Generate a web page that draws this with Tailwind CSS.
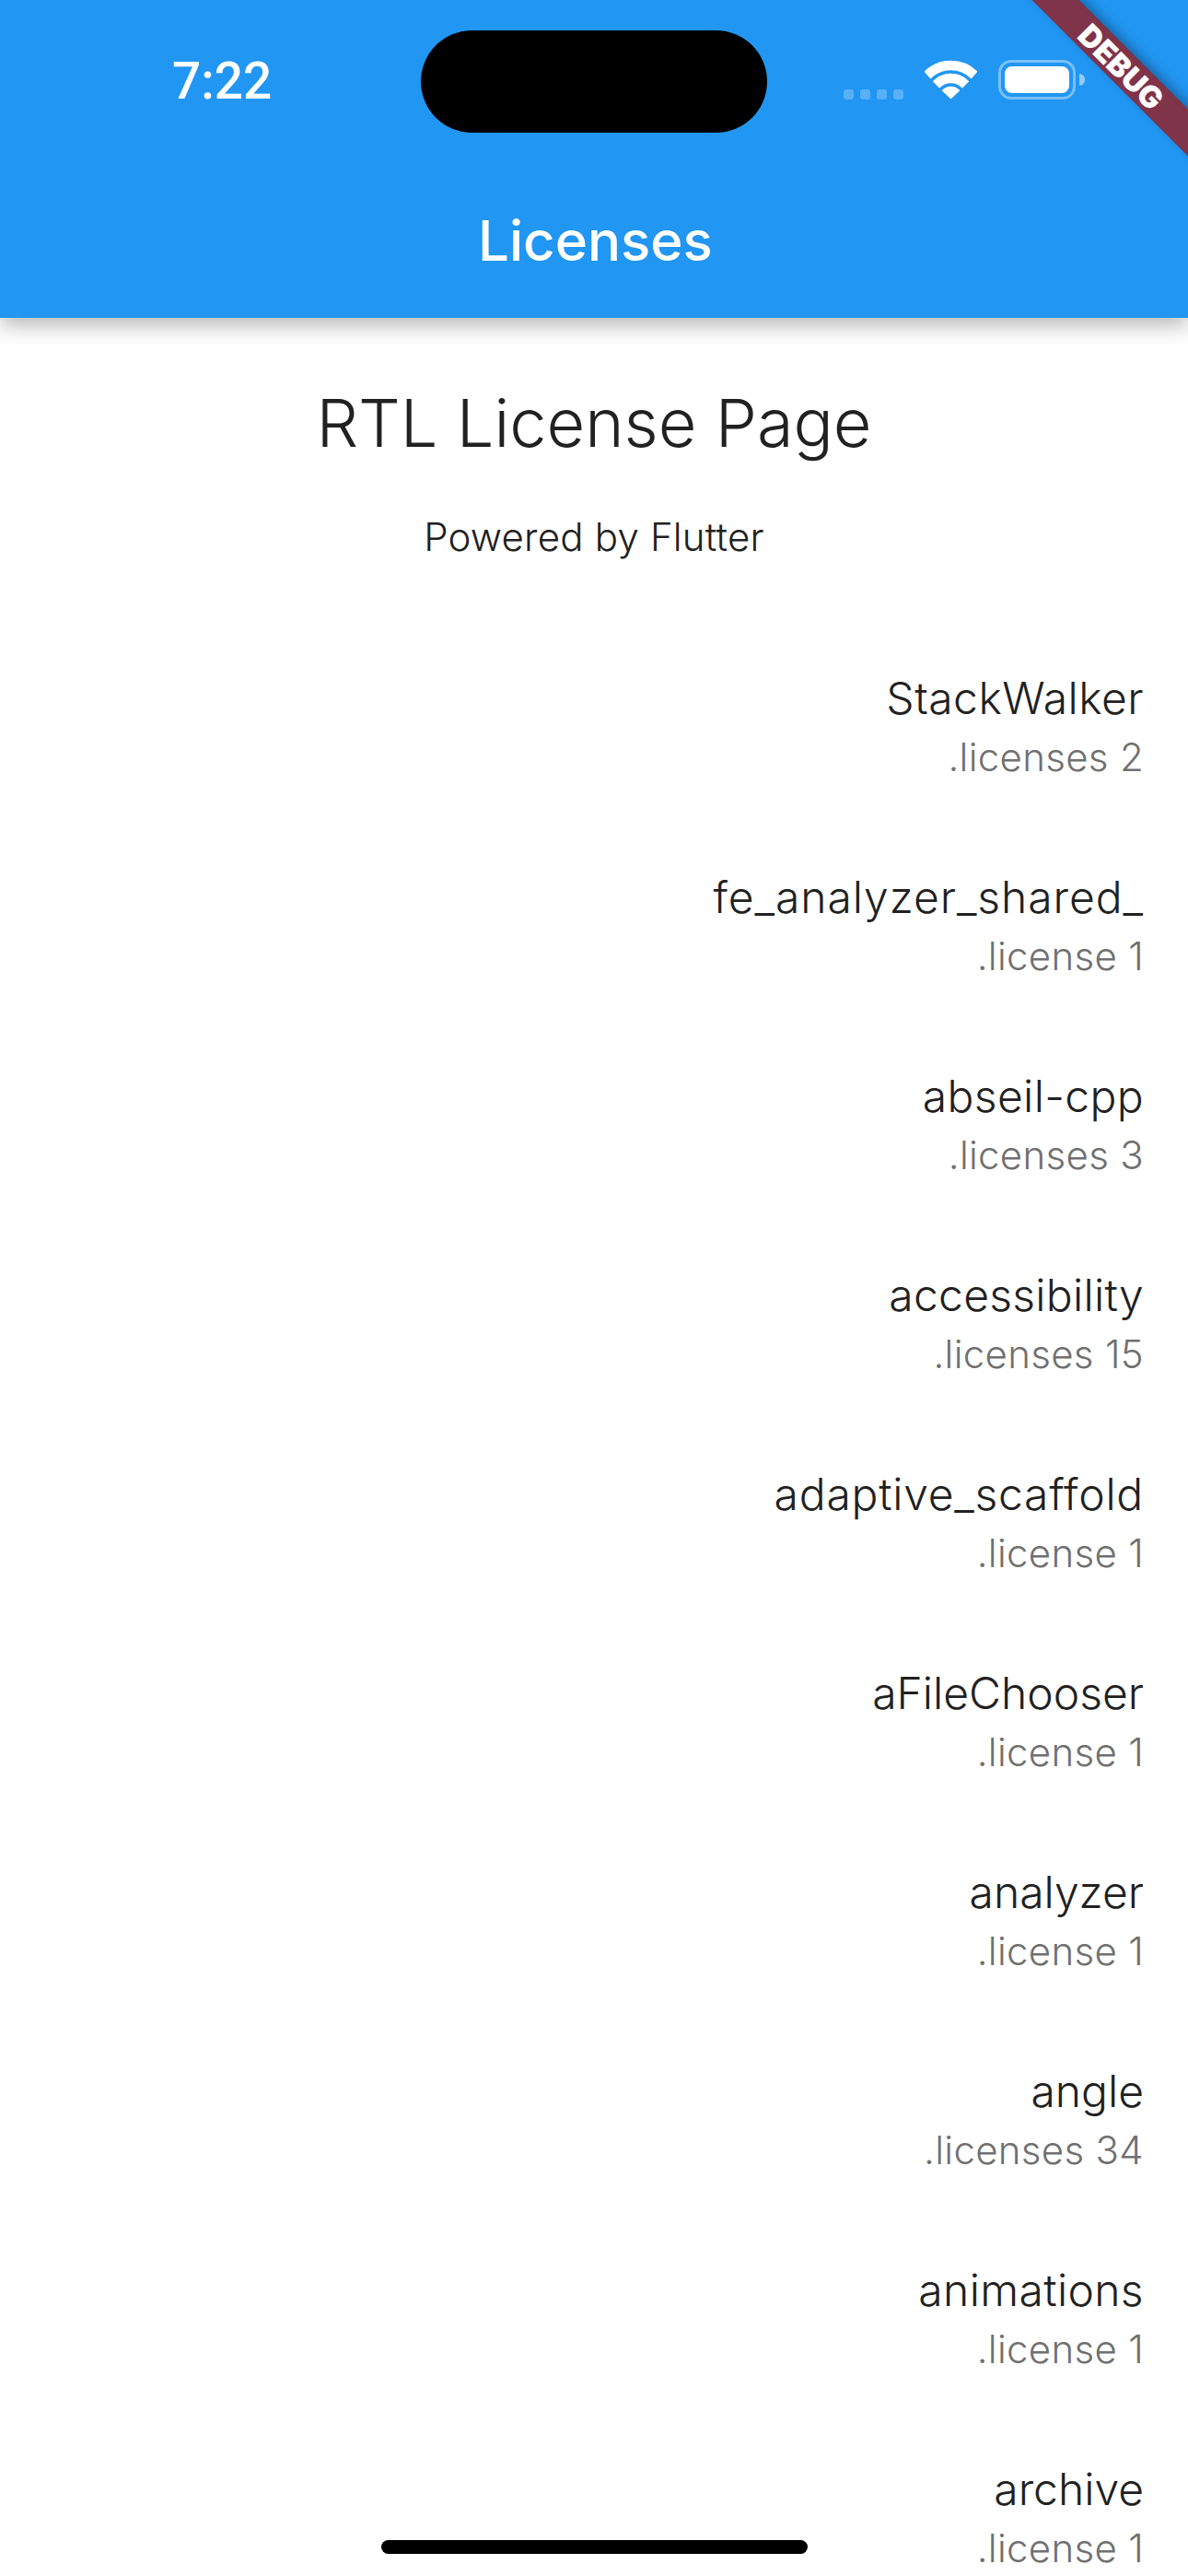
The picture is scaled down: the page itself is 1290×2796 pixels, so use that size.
<!DOCTYPE html>
<html lang="en">
<head>
    <meta charset="UTF-8">
    <meta name="viewport" content="width=device-width, initial-scale=1.0">
    <title>Licenses</title>
    <script src="https://cdn.jsdelivr.net/npm/@tailwindcss/browser@4"></script>
</head>
<body class="bg-white w-[1290px] h-[2796px] overflow-hidden relative font-['Inter',sans-serif]">
    <!-- app bar -->
    <header class="bg-[#2196f3] h-[345px] shadow-[0_8px_22px_rgba(0,0,0,0.29)] relative z-10 text-white">
        <div class="h-[177px] relative flex items-start">
            <div class="w-[457px] pt-[60px] pl-[187px] text-[55px] leading-[56px] font-['Roboto',sans-serif] font-medium">7:22</div>
            <div class="w-[376px] h-[111px] mt-[33px] bg-black rounded-full"></div>
            <div class="flex items-end pl-[83px] pt-[65px] h-[108px]">
                <div class="flex gap-[7px]">
                    <span class="w-[11px] h-[11px] rounded-[3px] bg-white/25"></span>
                    <span class="w-[11px] h-[11px] rounded-[3px] bg-white/25"></span>
                    <span class="w-[11px] h-[11px] rounded-[3px] bg-white/25"></span>
                    <span class="w-[11px] h-[11px] rounded-[3px] bg-white/25"></span>
                </div>
                <svg class="ml-[23px] w-[57px] h-[43px]" viewBox="0 0 57 43" fill="white" stroke="white" stroke-width="1.5" stroke-linejoin="round">
                    <path d="M0.5 12.8 A40.5 40.5 0 0 1 56.5 12.8 L50.5 19.5 A31.5 31.5 0 0 0 6.5 19.5 Z"/>
                    <path d="M9.8 23.3 A26.5 26.5 0 0 1 47.2 23.3 L40.9 29.6 A17.5 17.5 0 0 0 16.1 29.6 Z"/>
                    <path d="M19.7 33.2 A12.5 12.5 0 0 1 37.3 33.2 L28.5 41.5 Z"/>
                </svg>
                <div class="ml-[23px] w-[84px] h-[43px] rounded-[14px] border-[3px] border-white/40 p-[4px]">
                    <div class="w-full h-full rounded-[8px] bg-white"></div>
                </div>
                <div class="ml-[4px] mb-[15px] w-[6px] h-[13px] rounded-r-full bg-white/50"></div>
            </div>
        </div>
        <div class="h-[168px] flex items-center justify-center pl-[3px]">
            <h1 class="text-[60px] leading-none font-medium">Licenses</h1>
        </div>
    </header>

    <main class="text-[#212121] font-[350]">
        <div class="flex flex-col items-center">
            <h2 class="mt-[66px] text-[72px] leading-[96px]">RTL License Page</h2>
            <p class="mt-[46px] text-[42px] leading-[60px] tracking-[0.2px]">Powered by Flutter</p>
        </div>

        <!-- rtl package list -->
        <ul class="mt-[113px] pr-[48px] text-right">
            <li class="h-[216px]"><p class="mb-[2px] text-[48px] leading-[64px] tracking-[0.48px]">StackWalker</p><p class="text-[42px] leading-[60px] tracking-[0.3px] text-[#707070]">.licenses 2</p></li>
            <li class="h-[216px]"><p class="mb-[2px] text-[48px] leading-[64px] tracking-[0.94px]">fe_analyzer_shared_</p><p class="text-[42px] leading-[60px] tracking-[0.3px] text-[#707070]">.license 1</p></li>
            <li class="h-[216px]"><p class="mb-[2px] text-[48px] leading-[64px] tracking-[0.36px]">abseil-cpp</p><p class="text-[42px] leading-[60px] tracking-[0.3px] text-[#707070]">.licenses 3</p></li>
            <li class="h-[216px]"><p class="mb-[2px] text-[48px] leading-[64px] tracking-[0.27px]">accessibility</p><p class="text-[42px] leading-[60px] tracking-[0.3px] text-[#707070]">.licenses 15</p></li>
            <li class="h-[216px]"><p class="mb-[2px] text-[48px] leading-[64px] tracking-[0.75px]">adaptive_scaffold</p><p class="text-[42px] leading-[60px] tracking-[0.3px] text-[#707070]">.license 1</p></li>
            <li class="h-[216px]"><p class="mb-[2px] text-[48px] leading-[64px]">aFileChooser</p><p class="text-[42px] leading-[60px] tracking-[0.3px] text-[#707070]">.license 1</p></li>
            <li class="h-[216px]"><p class="mb-[2px] text-[48px] leading-[64px]">analyzer</p><p class="text-[42px] leading-[60px] tracking-[0.3px] text-[#707070]">.license 1</p></li>
            <li class="h-[216px]"><p class="mb-[2px] text-[48px] leading-[64px]">angle</p><p class="text-[42px] leading-[60px] tracking-[0.3px] text-[#707070]">.licenses 34</p></li>
            <li class="h-[216px]"><p class="mb-[2px] text-[48px] leading-[64px] tracking-[0.36px]">animations</p><p class="text-[42px] leading-[60px] tracking-[0.3px] text-[#707070]">.license 1</p></li>
            <li class="h-[216px]"><p class="mb-[2px] text-[48px] leading-[64px]">archive</p><p class="text-[42px] leading-[60px] tracking-[0.3px] text-[#707070]">.license 1</p></li>
        </ul>
    </main>

    <!-- debug ribbon, clipped to its corner -->
    <div class="absolute z-20 top-0 right-0 w-[220px] h-[210px] overflow-hidden">
        <div class="absolute left-[-52px] top-[54px] w-[400px] h-[36px] rotate-45 bg-[#7f3449] shadow-[0_-5px_12px_rgba(0,0,0,0.3)] flex items-center justify-center pt-[3px] text-white text-[33px] leading-none font-black">DEBUG</div>
    </div>

    <!-- home indicator -->
    <div class="absolute z-20 left-[414px] top-[2757px] w-[463px] h-[15px] rounded-full bg-black"></div>
</body>
</html>
